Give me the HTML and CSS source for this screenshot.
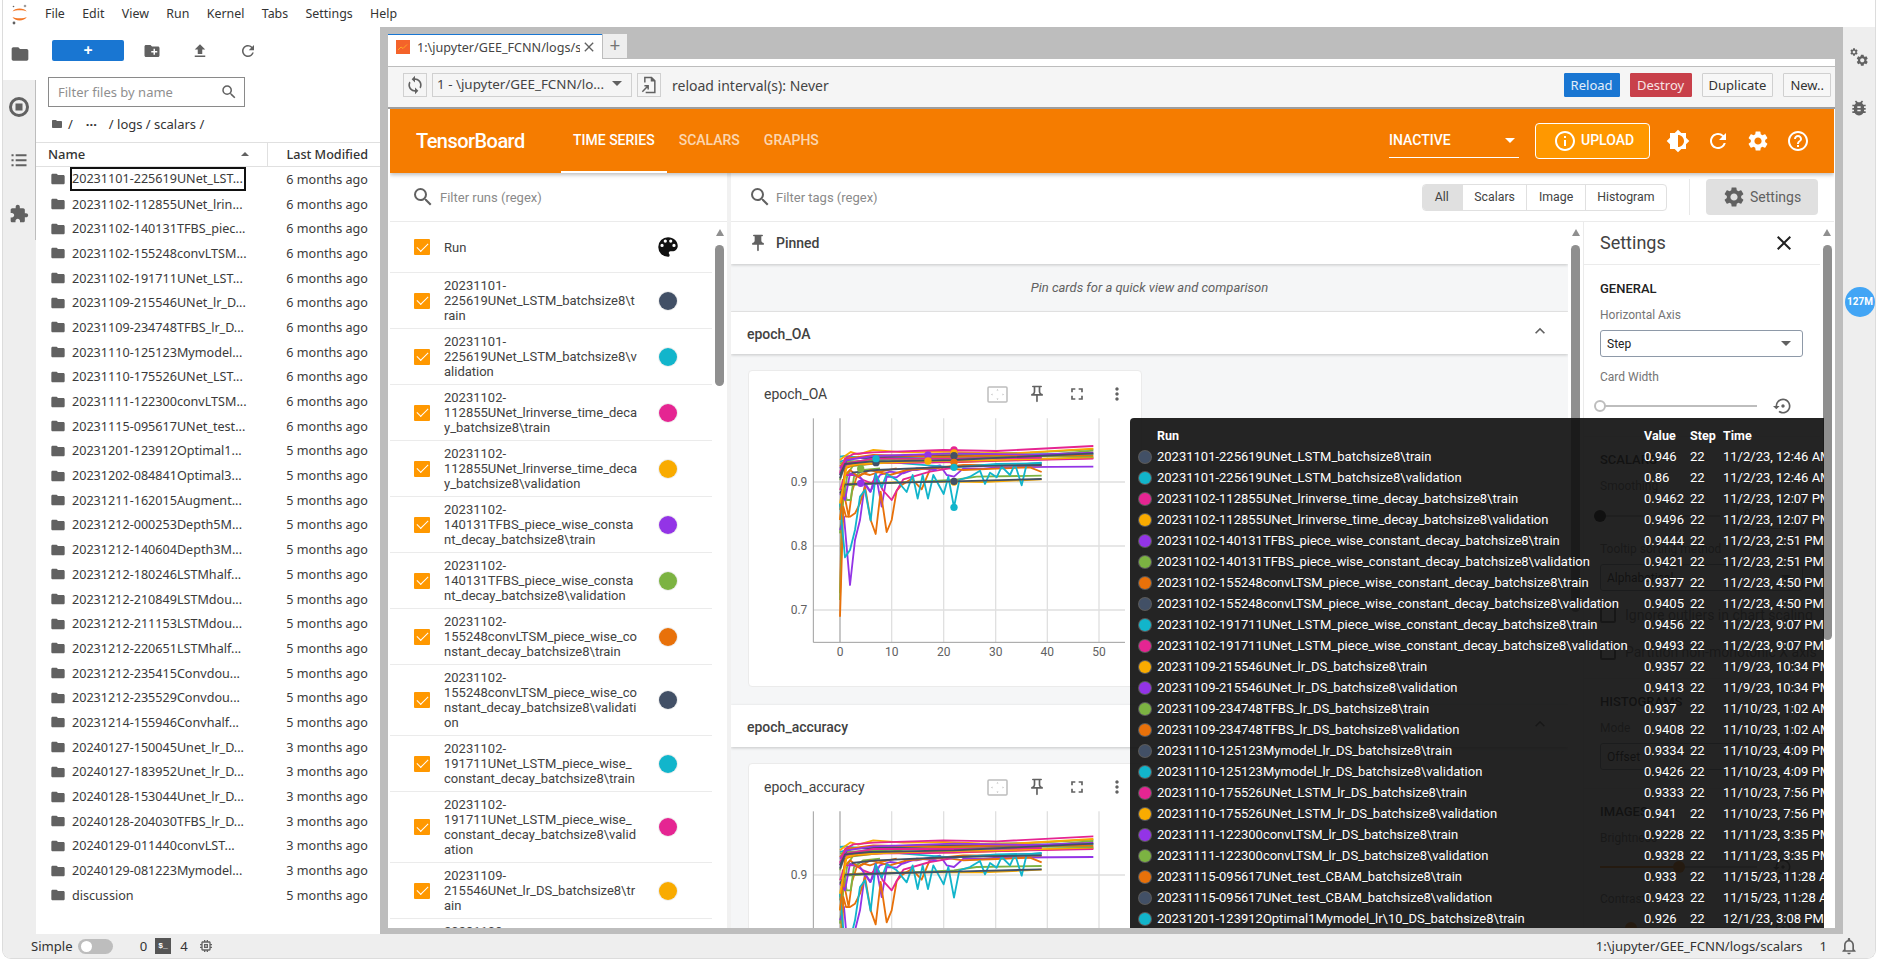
FILE: index.html
```html
<!DOCTYPE html>
<html lang="en">
<head>
<meta charset="utf-8">
<title>JupyterLab - TensorBoard</title>
<link rel="stylesheet" href="styles.css">
</head>
<body>
<svg class="defs" aria-hidden="true">
  <symbol id="i-folder" viewBox="0 0 24 24"><path d="M10 4H4c-1.1 0-2 .9-2 2v12c0 1.1.9 2 2 2h16c1.1 0 2-.9 2-2V8c0-1.1-.9-2-2-2h-8l-2-2z"/></symbol>
  <symbol id="i-stop" viewBox="0 0 24 24"><path fill-rule="evenodd" d="M12 2a10 10 0 1 0 0 20 10 10 0 0 0 0-20zm0 3a7 7 0 1 1 0 14 7 7 0 0 1 0-14zM8.500 8.500h7v7h-7z"/></symbol>
  <symbol id="i-list" viewBox="0 0 24 24"><path d="M3 5h2.500v2.500H3zM8 5h13v2.500H8zM3 11h2.500v2.500H3zM8 11h13v2.500H8zM3 17h2.500v2.500H3zM8 17h13v2.500H8z"/></symbol>
  <symbol id="i-ext" viewBox="0 0 24 24"><path d="M20.500 11H19V7c0-1.100-.9-2-2-2h-4V3.500C13 2.120 11.880 1 10.500 1S8 2.120 8 3.500V5H4c-1.100 0-1.990.9-1.990 2v3.800H3.500c1.490 0 2.700 1.210 2.700 2.700s-1.210 2.700-2.700 2.700H2V20c0 1.100.9 2 2 2h3.800v-1.500c0-1.490 1.210-2.700 2.700-2.700 1.490 0 2.700 1.210 2.700 2.700V22H17c1.100 0 2-.9 2-2v-4h1.500c1.380 0 2.500-1.120 2.500-2.500S21.880 11 20.500 11z"/></symbol>
  <symbol id="i-newfolder" viewBox="0 0 24 24"><path d="M20 6h-8l-2-2H4c-1.110 0-1.990.89-1.990 2L2 18c0 1.110.89 2 2 2h16c1.110 0 2-.89 2-2V8c0-1.110-.89-2-2-2zm-1 8h-3v3h-2v-3h-3v-2h3V9h2v3h3v2z"/></symbol>
  <symbol id="i-upload" viewBox="0 0 24 24"><path d="M9 16h6v-6h4l-7-7-7 7h4zm-4 2h14v2H5z"/></symbol>
  <symbol id="i-refresh" viewBox="0 0 24 24"><path d="M17.650 6.350A7.958 7.958 0 0 0 12 4c-4.420 0-7.990 3.580-7.990 8s3.570 8 7.990 8c3.730 0 6.840-2.550 7.730-6h-2.080A5.990 5.990 0 0 1 12 18c-3.310 0-6-2.690-6-6s2.690-6 6-6c1.660 0 3.140.69 4.220 1.780L13 11h7V4l-2.350 2.350z"/></symbol>
  <symbol id="i-search" viewBox="0 0 24 24"><path d="M15.500 14h-.79l-.28-.27A6.471 6.471 0 0 0 16 9.500 6.500 6.500 0 1 0 9.500 16c1.610 0 3.090-.59 4.230-1.570l.27.28v.79l5 4.990L20.490 19l-4.990-5zm-6 0C7.010 14 5 11.990 5 9.500S7.010 5 9.500 5 14 7.010 14 9.500 11.990 14 9.500 14z"/></symbol>
  <symbol id="i-gear" viewBox="0 0 24 24"><path id="gear-shape" d="M19.140 12.940c.04-.3.06-.61.06-.94 0-.32-.02-.64-.07-.94l2.030-1.580a.49.49 0 0 0 .12-.61l-1.920-3.320a.488.488 0 0 0-.59-.22l-2.390.96c-.5-.38-1.030-.7-1.620-.94l-.36-2.540a.484.484 0 0 0-.48-.41h-3.840c-.24 0-.43.17-.47.41l-.36 2.540c-.59.24-1.130.57-1.620.94l-2.390-.96c-.22-.08-.47 0-.59.22L2.740 8.870c-.12.21-.08.47.12.61l2.030 1.580c-.05.3-.09.63-.09.94s.02.64.07.94l-2.030 1.580a.49.49 0 0 0-.12.61l1.920 3.320c.12.22.37.29.59.22l2.390-.96c.5.38 1.030.7 1.620.94l.36 2.540c.05.24.24.41.48.41h3.840c.24 0 .44-.17.47-.41l.36-2.540c.59-.24 1.130-.56 1.620-.94l2.390.96c.22.08.47 0 .59-.22l1.920-3.320c.12-.22.07-.47-.12-.61l-2.010-1.580zM12 15.600c-1.980 0-3.600-1.620-3.600-3.600s1.620-3.600 3.600-3.600 3.600 1.620 3.600 3.600-1.620 3.600-3.600 3.600z"/></symbol>
  <symbol id="i-gears" viewBox="0 0 24 24"><g transform="translate(7.500 7.500) scale(.7)"><use href="#gear-shape"/></g><g transform="translate(.5 .5) scale(.46)"><use href="#gear-shape"/></g></symbol>
  <symbol id="i-help" viewBox="0 0 24 24"><path d="M11 18h2v-2h-2v2zm1-16C6.480 2 2 6.480 2 12s4.480 10 10 10 10-4.480 10-10S17.520 2 12 2zm0 18c-4.410 0-8-3.590-8-8s3.590-8 8-8 8 3.590 8 8-3.590 8-8 8zm0-14c-2.210 0-4 1.790-4 4h2c0-1.100.9-2 2-2s2 .9 2 2c0 2-3 1.750-3 5h2c0-2.250 3-2.500 3-5 0-2.210-1.790-4-4-4z"/></symbol>
  <symbol id="i-info" viewBox="0 0 24 24"><path d="M11 7h2v2h-2zm0 4h2v6h-2zm1-9C6.480 2 2 6.480 2 12s4.480 10 10 10 10-4.480 10-10S17.520 2 12 2zm0 18c-4.410 0-8-3.590-8-8s3.590-8 8-8 8 3.590 8 8-3.590 8-8 8z"/></symbol>
  <symbol id="i-bright" viewBox="0 0 24 24"><path d="M20 15.310L23.310 12 20 8.690V4h-4.690L12 .69 8.690 4H4v4.690L.69 12 4 15.310V20h4.690L12 23.310 15.310 20H20v-4.690zM12 18V6c3.310 0 6 2.690 6 6s-2.690 6-6 6z"/></symbol>
  <symbol id="i-palette" viewBox="0 0 24 24"><path d="M12 3a9 9 0 0 0 0 18c.83 0 1.500-.67 1.500-1.500 0-.39-.15-.74-.39-1.010-.23-.26-.38-.61-.38-.99 0-.83.67-1.500 1.500-1.500H16c2.760 0 5-2.240 5-5 0-4.420-4.030-8-9-8zm-5.500 9a1.500 1.500 0 1 1 0-3 1.500 1.500 0 0 1 0 3zm3-4a1.500 1.500 0 1 1 0-3 1.500 1.500 0 0 1 0 3zm5 0a1.500 1.500 0 1 1 0-3 1.500 1.500 0 0 1 0 3zm3 4a1.500 1.500 0 1 1 0-3 1.500 1.500 0 0 1 0 3z"/></symbol>
  <symbol id="i-pin" viewBox="0 0 24 24"><path d="M16 9V4h1c.55 0 1-.45 1-1s-.45-1-1-1H7c-.55 0-1 .45-1 1s.45 1 1 1h1v5c0 1.660-1.340 3-3 3v2h5.970v7l1 1 1-1v-7H19v-2c-1.660 0-3-1.340-3-3z"/></symbol>
  <symbol id="i-pinline" viewBox="0 0 24 24"><path d="M14 4v5c0 1.120.37 2.160 1 3H9c.65-.86 1-1.900 1-3V4h4m3-2H7c-.55 0-1 .45-1 1s.45 1 1 1h1v5c0 1.660-1.340 3-3 3v2h5.970v7l1 1 1-1v-7H19v-2c-1.660 0-3-1.340-3-3V4h1c.55 0 1-.45 1-1s-.45-1-1-1z"/></symbol>
  <symbol id="i-full" viewBox="0 0 24 24"><path d="M7 14H5v5h5v-2H7v-3zm-2-4h2V7h3V5H5v5zm12 7h-3v2h5v-5h-2v3zM14 5v2h3v3h2V5h-5z"/></symbol>
  <symbol id="i-more" viewBox="0 0 24 24"><path d="M12 8c1.100 0 2-.9 2-2s-.9-2-2-2-2 .9-2 2 .9 2 2 2zm0 2c-1.100 0-2 .9-2 2s.9 2 2 2 2-.9 2-2-.9-2-2-2zm0 6c-1.100 0-2 .9-2 2s.9 2 2 2 2-.9 2-2-.9-2-2-2z"/></symbol>
  <symbol id="i-close" viewBox="0 0 24 24"><path d="M19 6.410L17.590 5 12 10.590 6.410 5 5 6.410 10.590 12 5 17.590 6.410 19 12 13.410 17.590 19 19 17.590 13.410 12 19 6.410z"/></symbol>
  <symbol id="i-up" viewBox="0 0 24 24"><path d="M12 8l-6 6 1.410 1.410L12 10.830l4.590 4.580L18 14z"/></symbol>
  <symbol id="i-restore" viewBox="0 0 24 24"><path d="M14 12c0-1.100-.9-2-2-2s-2 .9-2 2 .9 2 2 2 2-.9 2-2zm-2-9a9 9 0 0 0-9 9H0l4 4 4-4H5c0-3.870 3.130-7 7-7s7 3.130 7 7a6.995 6.995 0 0 1-11.060 5.700l-1.420 1.440A9 9 0 1 0 12 3z"/></symbol>
  <symbol id="i-bug" viewBox="0 0 24 24"><path d="M20 8h-2.810a5.985 5.985 0 0 0-1.820-1.960L17 4.410 15.590 3l-2.170 2.170C12.960 5.060 12.490 5 12 5s-.96.06-1.410.17L8.410 3 7 4.410l1.620 1.630C7.880 6.550 7.260 7.220 6.810 8H4v2h2.090c-.05.33-.09.66-.09 1v1H4v2h2v1c0 .34.04.67.09 1H4v2h2.810c1.040 1.790 2.970 3 5.190 3s4.150-1.210 5.190-3H20v-2h-2.090c.05-.33.09-.66.09-1v-1h2v-2h-2v-1c0-.34-.04-.67-.09-1H20V8zm-6 8h-4v-2h4v2zm0-4h-4v-2h4v2z"/></symbol>
  <symbol id="i-bell" viewBox="0 0 24 24"><path d="M12 22c1.100 0 2-.9 2-2h-4c0 1.100.89 2 2 2zm6-6v-5c0-3.070-1.640-5.640-4.500-6.320V4c0-.83-.67-1.500-1.500-1.500s-1.500.67-1.500 1.500v.68C7.630 5.360 6 7.920 6 11v5l-2 2v1h16v-1l-2-2zm-2 1H8v-6c0-2.480 1.510-4.500 4-4.500s4 2.020 4 4.500v6z"/></symbol>
  <symbol id="i-chip" viewBox="0 0 24 24"><path d="M15 9H9v6h6V9zm-2 4h-2v-2h2v2zm8-2V9h-2V7c0-1.100-.9-2-2-2h-2V3h-2v2h-2V3H9v2H7c-1.100 0-2 .9-2 2v2H3v2h2v2H3v2h2v2c0 1.100.9 2 2 2h2v2h2v-2h2v2h2v-2h2c1.100 0 2-.9 2-2v-2h2v-2h-2v-2h2zm-4 6H7V7h10v10z"/></symbol>
  <symbol id="i-sync" viewBox="0 0 24 24"><path d="M12 4V1L8 5l4 4V6c3.310 0 6 2.690 6 6 0 1.010-.25 1.970-.7 2.800l1.460 1.460A7.930 7.930 0 0 0 20 12c0-4.420-3.580-8-8-8zm0 14c-3.310 0-6-2.690-6-6 0-1.010.25-1.970.7-2.800L5.240 7.740A7.930 7.930 0 0 0 4 12c0 4.420 3.580 8 8 8v3l4-4-4-4v3z"/></symbol>
  <symbol id="i-openfile" viewBox="0 0 24 24"><path fill="none" stroke="#616161" stroke-width="1.800" d="M7 9V3h8l4 4v14H8M15 3v4h4M4 20l7-7M6.500 13H11v4.500"/></symbol>
  <symbol id="series" viewBox="54 174 1182 762">
    <g class="ln">
      <polyline class="s-green" points="330,520 340,420 352,345 368,318 420,312 520,298 720,292 935,286 1090,272"/>
      <polyline class="s-amber" points="330,480 345,372 420,368 672,365 760,366 935,358"/>
      <polyline class="s-green" points="330,440 345,376 500,368 672,360 740,350 935,347"/>
      <polyline class="s-orange" points="330,700 338,360 346,420 356,470 366,395 380,350 400,340 420,345 450,335 500,325"/>
      <polyline class="s-green" points="330,720 340,360 350,420 362,420 372,350 400,330 450,325"/>
      <polyline class="s-purple" points="330,510 342,470 360,675 375,540 390,480 405,370 422,395 437,340 455,440 470,350 500,352 530,330 560,330 600,322 630,316 650,345 672,350 700,325 760,326 800,322 1090,320"/>
      <polyline class="s-orange" points="330,770 340,440 348,470 360,470 375,460 390,430 405,380 422,480 437,522 452,395 470,516 485,480 500,392 515,375 545,356 575,388 600,328 640,322 700,330 800,326 900,322 935,336"/>
      <polyline class="s-pink" points="330,390 345,345 375,345 400,360 425,370 440,350 458,390 485,420 500,392 520,358 600,335 700,318 935,310"/>
      <polyline class="s-purple" points="330,400 345,420 360,340 390,350 420,395 450,345 480,335 520,340 560,325 620,330"/>
      <polyline class="s-orange" points="330,450 345,345 360,330 385,350 420,330 480,345 530,330 600,325 700,315 935,316"/>
      <polyline class="s-cyan" points="330,430 345,592 360,570 375,510 390,410 405,390 422,482 437,342 455,382 470,342 500,360 530,396 548,345 563,416 578,345 594,416 610,345 641,402 655,350 672,442 688,360 720,350 750,332 765,372 780,338 800,352 815,320 840,345 855,312 875,376 890,312 935,308"/>
      <polyline class="s-cyan" points="330,305 345,300 375,306 420,298 520,310 672,322 800,312 935,310"/>
      <polyline class="s-slate" points="365,338 440,330 672,320 935,315"/>
      <polyline class="s-slate" points="330,400 345,373 500,368 672,364 935,357"/>
      <polyline class="s-orange" points="330,480 345,325 375,315 500,305 672,307 935,298 1090,294"/>
      <polyline class="s-pink" points="330,320 345,315 400,310 600,308 800,302 1090,296"/>
      <polyline class="s-amber" points="330,430 350,320 380,312 594,303 800,300 1090,292"/>
      <polyline class="s-purple" points="330,345 350,310 400,305 594,285 800,295 935,292"/>
      <polyline class="s-green" points="330,310 350,305 520,296 800,288 1090,290"/>
      <polyline class="s-cyan" points="330,290 345,288 400,294 438,296 600,288 800,284 1090,282"/>
      <polyline class="s-green" points="330,360 350,296 420,290 672,282 900,278 1090,268"/>
      <polyline class="s-slate" points="330,355 350,300 370,295 500,290 672,287 935,285"/>
      <polyline class="s-amber" points="330,300 345,288 362,276 385,283 430,270 520,277 640,275 750,279 850,280 1090,266"/>
      <polyline class="s-orange" points="330,320 350,296 430,285 640,290 800,286 1090,286"/>
      <polyline class="s-purple" points="330,325 350,300 430,288 672,280 900,284 1090,278"/>
      <polyline class="s-pink" points="330,340 345,296 370,282 430,277 640,270 800,273 1090,258"/>
      <polyline class="s-pink" points="330,335 350,310 430,296 672,296 935,293"/>
      <polyline class="s-slate" points="330,345 345,312 420,305 672,300 1090,280"/>
    </g>
  </symbol>
  <symbol id="markers" viewBox="54 174 1182 762">
    <circle class="f-pink" cx="672" cy="270" r="11"/>
    <circle class="f-amber" cx="672" cy="279" r="11"/>
    <circle class="f-slate" cx="672" cy="287" r="11"/>
    <circle class="f-purple" cx="594" cy="285" r="11"/>
    <circle class="f-amber" cx="594" cy="303" r="11"/>
    <circle class="f-orange" cx="672" cy="307" r="11"/>
    <circle class="f-cyan" cx="672" cy="322" r="11"/>
    <circle class="f-slate" cx="438" cy="308" r="11"/>
    <circle class="f-cyan" cx="438" cy="296" r="11"/>
    <circle class="f-green" cx="392" cy="326" r="11"/>
    <circle class="f-purple" cx="392" cy="370" r="11"/>
    <circle class="f-amber" cx="672" cy="366" r="11"/>
    <circle class="f-slate" cx="672" cy="364" r="11"/>
    <circle class="f-cyan" cx="672" cy="442" r="11"/>
  </symbol>
</svg>

<div class="app">
  <header class="menubar">
    <svg class="jp-logo" viewBox="0 0 18 22"><path class="arc" d="M1.500 8.500C3.500 4.500 13.500 4.500 15.800 8.500C13 6.800 4.500 6.800 1.500 8.500z"/><path class="arc" d="M1.500 14C3.500 18.500 13.500 18.500 15.800 14C13 15.800 4.500 15.800 1.500 14z"/><circle class="dot1" cx="14" cy="3" r="1.300"/><circle class="dot2" cx="3" cy="20" r="1.400"/><circle class="dot2" cx="2.500" cy="3.500" r=".8"/></svg>
    <nav class="menus"><span>File</span><span>Edit</span><span>View</span><span>Run</span><span>Kernel</span><span>Tabs</span><span>Settings</span><span>Help</span></nav>
  </header>

  <div class="workspace">
    <aside class="leftbar">
      <div class="sidetab active"><svg class="ic20"><use href="#i-folder"/></svg></div>
      <div class="sidetab"><svg class="ic24"><use href="#i-stop"/></svg></div>
      <div class="sidetab"><svg class="ic20"><use href="#i-list"/></svg></div>
      <div class="sidetab"><svg class="ic20"><use href="#i-ext"/></svg></div>
    </aside>

    <section class="files">
      <div class="fb-tools">
        <button class="newbtn">+</button>
        <span class="fb-tool"><svg class="ic18"><use href="#i-newfolder"/></svg></span>
        <span class="fb-tool"><svg class="ic18"><use href="#i-upload"/></svg></span>
        <span class="fb-tool"><svg class="ic18"><use href="#i-refresh"/></svg></span>
      </div>
      <div class="fb-filter"><span>Filter files by name</span><svg class="ic18"><use href="#i-search"/></svg></div>
      <div class="crumbs"><svg class="ic12"><use href="#i-folder"/></svg><span>/</span><span class="dots">···</span><span>/ logs / scalars /</span></div>
      <div class="fb-head"><div class="col-name">Name<i class="sort"></i></div><div class="col-date">Last Modified</div></div>
      <ul class="fb-list">
        <li class="sel"><svg class="ic15"><use href="#i-folder"/></svg><span class="fname">20231101-225619UNet_LST...</span><span class="fdate">6 months ago</span></li>
        <li><svg class="ic15"><use href="#i-folder"/></svg><span class="fname">20231102-112855UNet_lrin...</span><span class="fdate">6 months ago</span></li>
        <li><svg class="ic15"><use href="#i-folder"/></svg><span class="fname">20231102-140131TFBS_piec...</span><span class="fdate">6 months ago</span></li>
        <li><svg class="ic15"><use href="#i-folder"/></svg><span class="fname">20231102-155248convLTSM...</span><span class="fdate">6 months ago</span></li>
        <li><svg class="ic15"><use href="#i-folder"/></svg><span class="fname">20231102-191711UNet_LST...</span><span class="fdate">6 months ago</span></li>
        <li><svg class="ic15"><use href="#i-folder"/></svg><span class="fname">20231109-215546UNet_lr_D...</span><span class="fdate">6 months ago</span></li>
        <li><svg class="ic15"><use href="#i-folder"/></svg><span class="fname">20231109-234748TFBS_lr_D...</span><span class="fdate">6 months ago</span></li>
        <li><svg class="ic15"><use href="#i-folder"/></svg><span class="fname">20231110-125123Mymodel...</span><span class="fdate">6 months ago</span></li>
        <li><svg class="ic15"><use href="#i-folder"/></svg><span class="fname">20231110-175526UNet_LST...</span><span class="fdate">6 months ago</span></li>
        <li><svg class="ic15"><use href="#i-folder"/></svg><span class="fname">20231111-122300convLTSM...</span><span class="fdate">6 months ago</span></li>
        <li><svg class="ic15"><use href="#i-folder"/></svg><span class="fname">20231115-095617UNet_test...</span><span class="fdate">6 months ago</span></li>
        <li><svg class="ic15"><use href="#i-folder"/></svg><span class="fname">20231201-123912Optimal1...</span><span class="fdate">5 months ago</span></li>
        <li><svg class="ic15"><use href="#i-folder"/></svg><span class="fname">20231202-084841Optimal3...</span><span class="fdate">5 months ago</span></li>
        <li><svg class="ic15"><use href="#i-folder"/></svg><span class="fname">20231211-162015Augment...</span><span class="fdate">5 months ago</span></li>
        <li><svg class="ic15"><use href="#i-folder"/></svg><span class="fname">20231212-000253Depth5M...</span><span class="fdate">5 months ago</span></li>
        <li><svg class="ic15"><use href="#i-folder"/></svg><span class="fname">20231212-140604Depth3M...</span><span class="fdate">5 months ago</span></li>
        <li><svg class="ic15"><use href="#i-folder"/></svg><span class="fname">20231212-180246LSTMhalf...</span><span class="fdate">5 months ago</span></li>
        <li><svg class="ic15"><use href="#i-folder"/></svg><span class="fname">20231212-210849LSTMdou...</span><span class="fdate">5 months ago</span></li>
        <li><svg class="ic15"><use href="#i-folder"/></svg><span class="fname">20231212-211153LSTMdou...</span><span class="fdate">5 months ago</span></li>
        <li><svg class="ic15"><use href="#i-folder"/></svg><span class="fname">20231212-220651LSTMhalf...</span><span class="fdate">5 months ago</span></li>
        <li><svg class="ic15"><use href="#i-folder"/></svg><span class="fname">20231212-235415Convdou...</span><span class="fdate">5 months ago</span></li>
        <li><svg class="ic15"><use href="#i-folder"/></svg><span class="fname">20231212-235529Convdou...</span><span class="fdate">5 months ago</span></li>
        <li><svg class="ic15"><use href="#i-folder"/></svg><span class="fname">20231214-155946Convhalf...</span><span class="fdate">5 months ago</span></li>
        <li><svg class="ic15"><use href="#i-folder"/></svg><span class="fname">20240127-150045Unet_lr_D...</span><span class="fdate">3 months ago</span></li>
        <li><svg class="ic15"><use href="#i-folder"/></svg><span class="fname">20240127-183952Unet_lr_D...</span><span class="fdate">3 months ago</span></li>
        <li><svg class="ic15"><use href="#i-folder"/></svg><span class="fname">20240128-153044Unet_lr_D...</span><span class="fdate">3 months ago</span></li>
        <li><svg class="ic15"><use href="#i-folder"/></svg><span class="fname">20240128-204030TFBS_lr_D...</span><span class="fdate">3 months ago</span></li>
        <li><svg class="ic15"><use href="#i-folder"/></svg><span class="fname">20240129-011440convLST...</span><span class="fdate">3 months ago</span></li>
        <li><svg class="ic15"><use href="#i-folder"/></svg><span class="fname">20240129-081223Mymodel...</span><span class="fdate">3 months ago</span></li>
        <li><svg class="ic15"><use href="#i-folder"/></svg><span class="fname">discussion</span><span class="fdate">5 months ago</span></li>
      </ul>
    </section>

    <main class="dock">
      <div class="tabbar">
        <div class="tab"><span class="tab-ico"><svg viewBox="0 0 14 14"><polyline points="2,10 5,7 7,8.500 11,4.500"/></svg></span><span class="tab-label">1:\jupyter/GEE_FCNN/logs/scalars</span><svg class="ic16 tab-x"><use href="#i-close"/></svg></div>
        <div class="tab-add">+</div>
      </div>
      <div class="panel">
        <div class="strip"></div>
        <div class="tools">
          <span class="tbtn"><svg class="ic20"><use href="#i-sync"/></svg></span>
          <span class="sel-box"><span>1 - \jupyter/GEE_FCNN/lo...</span><i class="caret"></i></span>
          <span class="tbtn"><svg class="ic20"><use href="#i-openfile"/></svg></span>
          <span class="reload-label">reload interval(s): Never</span>
          <span class="spacer"></span>
          <button class="btn btn-blue">Reload</button>
          <button class="btn btn-red">Destroy</button>
          <button class="btn">Duplicate</button>
          <button class="btn">New..</button>
        </div>

        <div class="tb">
          <header class="tb-head">
            <div class="tb-logo">TensorBoard</div>
            <nav class="tb-tabs"><span class="on">TIME SERIES</span><span>SCALARS</span><span>GRAPHS</span></nav>
            <span class="spacer"></span>
            <div class="inactive"><span>INACTIVE</span><i class="caret white"></i></div>
            <button class="upload"><svg class="ic24"><use href="#i-info"/></svg><span>UPLOAD</span></button>
            <div class="tb-icons">
              <svg class="ic24"><use href="#i-bright"/></svg>
              <svg class="ic24"><use href="#i-refresh"/></svg>
              <svg class="ic24"><use href="#i-gear"/></svg>
              <svg class="ic24"><use href="#i-help"/></svg>
            </div>
          </header>

          <div class="tb-body">
            <section class="runs">
              <div class="filter"><svg class="ic24"><use href="#i-search"/></svg><span>Filter runs (regex)</span></div>
              <div class="runs-main">
                <div class="runs-table">
                  <div class="run run-head"><i class="check"></i><span class="run-name">Run</span><svg class="ic26"><use href="#i-palette"/></svg></div>
                  <div class="run"><i class="check"></i><span class="run-name">20231101-225619UNet_LSTM_batchsize8\train</span><i class="swatch f-slate"></i></div>
                  <div class="run"><i class="check"></i><span class="run-name">20231101-225619UNet_LSTM_batchsize8\validation</span><i class="swatch f-cyan"></i></div>
                  <div class="run"><i class="check"></i><span class="run-name">20231102-112855UNet_lrinverse_time_decay_batchsize8\train</span><i class="swatch f-pink"></i></div>
                  <div class="run"><i class="check"></i><span class="run-name">20231102-112855UNet_lrinverse_time_decay_batchsize8\validation</span><i class="swatch f-amber"></i></div>
                  <div class="run"><i class="check"></i><span class="run-name">20231102-140131TFBS_piece_wise_constant_decay_batchsize8\train</span><i class="swatch f-purple"></i></div>
                  <div class="run"><i class="check"></i><span class="run-name">20231102-140131TFBS_piece_wise_constant_decay_batchsize8\validation</span><i class="swatch f-green"></i></div>
                  <div class="run"><i class="check"></i><span class="run-name">20231102-155248convLTSM_piece_wise_constant_decay_batchsize8\train</span><i class="swatch f-orange"></i></div>
                  <div class="run"><i class="check"></i><span class="run-name">20231102-155248convLTSM_piece_wise_constant_decay_batchsize8\validation</span><i class="swatch f-slate"></i></div>
                  <div class="run"><i class="check"></i><span class="run-name">20231102-191711UNet_LSTM_piece_wise_constant_decay_batchsize8\train</span><i class="swatch f-cyan"></i></div>
                  <div class="run"><i class="check"></i><span class="run-name">20231102-191711UNet_LSTM_piece_wise_constant_decay_batchsize8\validation</span><i class="swatch f-pink"></i></div>
                  <div class="run"><i class="check"></i><span class="run-name">20231109-215546UNet_lr_DS_batchsize8\train</span><i class="swatch f-amber"></i></div>
                  <div class="run"><i class="check"></i><span class="run-name">20231109-215546UNet_lr_DS_batchsize8\validation</span><i class="swatch f-purple"></i></div>
                </div>
                <div class="vbar"><i class="vbar-up"></i><i class="vbar-thumb th-runs"></i></div>
              </div>
            </section>

            <section class="metrics">
              <div class="m-tools">
                <div class="filter flat"><svg class="ic24"><use href="#i-search"/></svg><span>Filter tags (regex)</span></div>
                <span class="spacer"></span>
                <div class="seg"><span class="on">All</span><span>Scalars</span><span>Image</span><span>Histogram</span></div>
                <i class="m-div"></i>
                <button class="settings-btn"><svg class="ic24"><use href="#i-gear"/></svg>Settings</button>
              </div>
              <div class="m-body">
                <div class="cards">
                  <div class="sec-head pinned"><svg class="ic20"><use href="#i-pin"/></svg><span>Pinned</span></div>
                  <div class="pin-msg">Pin cards for a quick view and comparison</div>
                  <div class="sec-head"><span>epoch_OA</span><svg class="ic20 chev"><use href="#i-up"/></svg></div>
                  <div class="sec-body">
                    <article class="card">
                      <div class="card-head"><span>epoch_OA</span>
                        <div class="card-tools"><svg class="fit" viewBox="0 0 21 17"><rect x="1" y="1" width="19" height="15" rx="1"/><path d="M10.500 3l-1 1.500h2zM10.500 14l-1-1.500h2zM4 8.500l1.500-1v2zM17 8.500l-1.500-1v2z"/></svg><svg class="ic20"><use href="#i-pinline"/></svg><svg class="ic20"><use href="#i-full"/></svg><svg class="ic20"><use href="#i-more"/></svg></div>
                      </div>
                      <svg class="chart" viewBox="54 174 1182 762">
                        <g class="grid"><path d="M485 175V847M641 175V847M797 175V847M952 175V847M1107 175V847M250 366H1185M250 558H1185M250 750H1185"/></g>
                        <path class="zero" d="M330 175V847"/>
                        <path class="axis" d="M250 175V847H1185"/>
                        <use href="#series" x="54" y="174" width="1182" height="762"/>
                        <use href="#markers" x="54" y="174" width="1182" height="762"/>
                        <g class="tick-y"><text x="232" y="378">0.9</text><text x="232" y="570">0.8</text><text x="232" y="762">0.7</text></g>
                        <g class="tick-x"><text x="330" y="889">0</text><text x="485" y="889">10</text><text x="641" y="889">20</text><text x="797" y="889">30</text><text x="952" y="889">40</text><text x="1107" y="889">50</text></g>
                      </svg>
                    </article>
                  </div>
                  <div class="sec-head"><span>epoch_accuracy</span><svg class="ic20 chev"><use href="#i-up"/></svg></div>
                  <div class="sec-body">
                    <article class="card">
                      <div class="card-head"><span>epoch_accuracy</span>
                        <div class="card-tools"><svg class="fit" viewBox="0 0 21 17"><rect x="1" y="1" width="19" height="15" rx="1"/><path d="M10.500 3l-1 1.500h2zM10.500 14l-1-1.500h2zM4 8.500l1.500-1v2zM17 8.500l-1.500-1v2z"/></svg><svg class="ic20"><use href="#i-pinline"/></svg><svg class="ic20"><use href="#i-full"/></svg><svg class="ic20"><use href="#i-more"/></svg></div>
                      </div>
                      <svg class="chart" viewBox="54 174 1182 762">
                        <g class="grid"><path d="M485 175V847M641 175V847M797 175V847M952 175V847M1107 175V847M250 366H1185M250 558H1185M250 750H1185"/></g>
                        <path class="zero" d="M330 175V847"/>
                        <path class="axis" d="M250 175V847H1185"/>
                        <use href="#series" x="54" y="166" width="1182" height="762"/>
                        <g class="tick-y"><text x="232" y="378">0.9</text></g>
                      </svg>
                    </article>
                  </div>
                </div>
                <div class="vbar"><i class="vbar-up"></i><i class="vbar-thumb th-cards"></i></div>
                <aside class="settings">
                  <div class="set-title"><span>Settings</span><svg class="ic24"><use href="#i-close"/></svg></div>
                  <div class="set-sec first">
                    <h3>GENERAL</h3>
                    <div class="lbl">Horizontal Axis</div>
                    <div class="pick"><span>Step</span><i class="caret"></i></div>
                    <div class="lbl lbl-gap">Card Width</div>
                    <div class="slide"><i class="track short"><b class="knob hollow"></b></i><svg class="ic20"><use href="#i-restore"/></svg></div>
                  </div>
                  <div class="set-sec">
                    <h3>SCALARS</h3>
                    <div class="lbl">Smoothing</div>
                    <div class="slide tall"><i class="track mid"><b class="knob dark"></b></i><span class="num">0</span></div>
                    <div class="lbl lbl-gap">Tooltip sorting method</div>
                    <div class="pick"><span>Alphabetical</span><i class="caret"></i></div>
                    <div class="chk-row"><i class="box"></i><span>Ignore outliers in chart scaling</span></div>
                    <div class="chk-row far"><i class="box"></i><span>Partition non-monotonic X axis</span></div>
                  </div>
                  <div class="set-sec">
                    <h3>HISTOGRAMS</h3>
                    <div class="lbl">Mode</div>
                    <div class="pick"><span>Offset</span><i class="caret"></i></div>
                  </div>
                  <div class="set-sec">
                    <h3>IMAGES</h3>
                    <div class="lbl">Brightness</div>
                    <div class="slide"><i class="track short lit"><b class="knob amber at-half"></b></i><svg class="ic20"><use href="#i-restore"/></svg></div>
                    <div class="lbl lbl-gap">Contrast</div>
                    <div class="slide"><i class="track short"><b class="knob amber at-fifth"></b></i><svg class="ic20"><use href="#i-restore"/></svg></div>
                  </div>
                </aside>
                <div class="vbar narrow"><i class="vbar-up"></i><i class="vbar-thumb th-set"></i></div>
              </div>
            </section>
          </div>

          <div class="tip">
            <table>
              <thead><tr><th></th><th>Run</th><th>Value</th><th>Step</th><th>Time</th></tr></thead>
              <tbody>
                <tr><td><i class="pt f-slate"></i></td><td>20231101-225619UNet_LSTM_batchsize8\train</td><td>0.946</td><td>22</td><td>11/2/23, 12:46 AM</td></tr>
                <tr><td><i class="pt f-cyan"></i></td><td>20231101-225619UNet_LSTM_batchsize8\validation</td><td>0.86</td><td>22</td><td>11/2/23, 12:46 AM</td></tr>
                <tr><td><i class="pt f-pink"></i></td><td>20231102-112855UNet_lrinverse_time_decay_batchsize8\train</td><td>0.9462</td><td>22</td><td>11/2/23, 12:07 PM</td></tr>
                <tr><td><i class="pt f-amber"></i></td><td>20231102-112855UNet_lrinverse_time_decay_batchsize8\validation</td><td>0.9496</td><td>22</td><td>11/2/23, 12:07 PM</td></tr>
                <tr><td><i class="pt f-purple"></i></td><td>20231102-140131TFBS_piece_wise_constant_decay_batchsize8\train</td><td>0.9444</td><td>22</td><td>11/2/23, 2:51 PM</td></tr>
                <tr><td><i class="pt f-green"></i></td><td>20231102-140131TFBS_piece_wise_constant_decay_batchsize8\validation</td><td>0.9421</td><td>22</td><td>11/2/23, 2:51 PM</td></tr>
                <tr><td><i class="pt f-orange"></i></td><td>20231102-155248convLTSM_piece_wise_constant_decay_batchsize8\train</td><td>0.9377</td><td>22</td><td>11/2/23, 4:50 PM</td></tr>
                <tr><td><i class="pt f-slate"></i></td><td>20231102-155248convLTSM_piece_wise_constant_decay_batchsize8\validation</td><td>0.9405</td><td>22</td><td>11/2/23, 4:50 PM</td></tr>
                <tr><td><i class="pt f-cyan"></i></td><td>20231102-191711UNet_LSTM_piece_wise_constant_decay_batchsize8\train</td><td>0.9456</td><td>22</td><td>11/2/23, 9:07 PM</td></tr>
                <tr><td><i class="pt f-pink"></i></td><td>20231102-191711UNet_LSTM_piece_wise_constant_decay_batchsize8\validation</td><td>0.9493</td><td>22</td><td>11/2/23, 9:07 PM</td></tr>
                <tr><td><i class="pt f-amber"></i></td><td>20231109-215546UNet_lr_DS_batchsize8\train</td><td>0.9357</td><td>22</td><td>11/9/23, 10:34 PM</td></tr>
                <tr><td><i class="pt f-purple"></i></td><td>20231109-215546UNet_lr_DS_batchsize8\validation</td><td>0.9413</td><td>22</td><td>11/9/23, 10:34 PM</td></tr>
                <tr><td><i class="pt f-green"></i></td><td>20231109-234748TFBS_lr_DS_batchsize8\train</td><td>0.937</td><td>22</td><td>11/10/23, 1:02 AM</td></tr>
                <tr><td><i class="pt f-orange"></i></td><td>20231109-234748TFBS_lr_DS_batchsize8\validation</td><td>0.9408</td><td>22</td><td>11/10/23, 1:02 AM</td></tr>
                <tr><td><i class="pt f-slate"></i></td><td>20231110-125123Mymodel_lr_DS_batchsize8\train</td><td>0.9334</td><td>22</td><td>11/10/23, 4:09 PM</td></tr>
                <tr><td><i class="pt f-cyan"></i></td><td>20231110-125123Mymodel_lr_DS_batchsize8\validation</td><td>0.9426</td><td>22</td><td>11/10/23, 4:09 PM</td></tr>
                <tr><td><i class="pt f-pink"></i></td><td>20231110-175526UNet_LSTM_lr_DS_batchsize8\train</td><td>0.9333</td><td>22</td><td>11/10/23, 7:56 PM</td></tr>
                <tr><td><i class="pt f-amber"></i></td><td>20231110-175526UNet_LSTM_lr_DS_batchsize8\validation</td><td>0.941</td><td>22</td><td>11/10/23, 7:56 PM</td></tr>
                <tr><td><i class="pt f-purple"></i></td><td>20231111-122300convLTSM_lr_DS_batchsize8\train</td><td>0.9228</td><td>22</td><td>11/11/23, 3:35 PM</td></tr>
                <tr><td><i class="pt f-green"></i></td><td>20231111-122300convLTSM_lr_DS_batchsize8\validation</td><td>0.9328</td><td>22</td><td>11/11/23, 3:35 PM</td></tr>
                <tr><td><i class="pt f-orange"></i></td><td>20231115-095617UNet_test_CBAM_batchsize8\train</td><td>0.933</td><td>22</td><td>11/15/23, 11:28 AM</td></tr>
                <tr><td><i class="pt f-slate"></i></td><td>20231115-095617UNet_test_CBAM_batchsize8\validation</td><td>0.9423</td><td>22</td><td>11/15/23, 11:28 AM</td></tr>
                <tr><td><i class="pt f-cyan"></i></td><td>20231201-123912Optimal1Mymodel_lr\10_DS_batchsize8\train</td><td>0.926</td><td>22</td><td>12/1/23, 3:08 PM</td></tr>
              </tbody>
            </table>
          </div>
        </div>
      </div>
    </main>

    <aside class="rightbar">
      <div class="rtab"><svg class="ic20"><use href="#i-gears"/></svg></div>
      <div class="rtab"><svg class="ic20"><use href="#i-bug"/></svg></div>
      <div class="mem-badge">127M</div>
    </aside>
  </div>

  <footer class="status">
    <span class="st-simple">Simple</span><i class="toggle"></i>
    <span class="st-zero">0</span><span class="term">$_</span><span class="st-four">4</span><svg class="ic16"><use href="#i-chip"/></svg>
    <span class="spacer"></span>
    <span>1:\jupyter/GEE_FCNN/logs/scalars</span><span class="st-one">1</span><svg class="ic20"><use href="#i-bell"/></svg>
  </footer>
</div>
</body>
</html>
```
FILE: styles.css
```css
* { box-sizing: border-box; }
html, body { margin: 0; width: 1879px; height: 962px; overflow: hidden; background: #fff; }
body { font-family: "Noto Sans", "Open Sans", sans-serif; font-size: 13px; color: #333; }
button { font: inherit; }
ul { list-style: none; margin: 0; padding: 0; }
i { display: block; font-style: normal; }
svg { fill: #616161; flex: none; }
.defs { position: absolute; width: 0; height: 0; }
.spacer { flex: 1; }
.ic12 { width: 12px; height: 12px; }
.ic14 { width: 14px; height: 14px; }
.ic15 { width: 16px; height: 16px; }
.ic16 { width: 16px; height: 16px; }
.ic18 { width: 18px; height: 18px; }
.ic20 { width: 20px; height: 20px; }
.ic24 { width: 24px; height: 24px; }
.ic26 { width: 26px; height: 26px; }

.app { height: 959px; margin: 0 3px 0 2px; display: flex; flex-direction: column; border: 1px solid #dcdcdc; border-top: 0; border-radius: 0 0 9px 9px; overflow: hidden; }

/* menu */
.menubar { height: 27px; flex: none; display: flex; align-items: center; background: #fff; }
.jp-logo { width: 18px; height: 22px; margin-left: 8px; }
.jp-logo .arc { fill: #f37726; }
.jp-logo .dot1 { fill: #9e9e9e; }
.jp-logo .dot2 { fill: #616161; }
.menus { display: flex; gap: 17.400px; margin-left: 16px; font-size: 12.400px; color: #333; }

.workspace { flex: 1; min-height: 0; display: flex; }

/* left */
.leftbar { width: 33px; flex: none; background: #eee; }
.sidetab { height: 53.300px; display: flex; align-items: center; justify-content: center; border-right: 1px solid #bdbdbd; }
.sidetab.active { background: #fff; border-right: 0; }

.files { width: 344px; flex: none; display: flex; flex-direction: column; background: #fff; font-size: 12.600px; }
.fb-tools { display: flex; align-items: center; padding: 13px 0 0 16px; height: 34px; }
.newbtn { width: 72px; height: 21px; margin-right: 4px; padding: 0 0 1px; border: 0; border-radius: 2px; background: #1976d2; color: #fff; font-size: 16px; font-weight: 700; line-height: 20px; }
.fb-tool { width: 48px; display: flex; justify-content: center; }
.fb-filter { margin: 16px 0 0 12px; width: 197px; height: 30px; flex: none; border: 1px solid #8a8a8a; display: flex; align-items: center; justify-content: space-between; padding: 0 6px 0 9px; color: #8f8f8f; font-size: 13px; }
.crumbs { height: 35px; flex: none; display: flex; align-items: center; gap: 5px; padding: 0 0 2px 15px; font-size: 13px; }
.crumbs .dots { margin: 0 7px 0 8px; font-weight: 700; color: #333; }
.fb-head { height: 25px; flex: none; display: flex; border-top: 1px solid #e0e0e0; border-bottom: 1px solid #e0e0e0; font-weight: 500; color: #333; line-height: 23px; font-size: 13px; }
.col-name { width: 232px; padding-left: 12px; position: relative; border-right: 1px solid #e0e0e0; display: flex; justify-content: space-between; }
.sort { margin: 9px 18px 0 0; border-left: 4px solid transparent; border-right: 4px solid transparent; border-bottom: 4px solid #616161; width: 0; height: 0; }
.col-date { flex: 1; padding-right: 12px; text-align: right; font-size: 12.600px; }
.fb-list li { height: 24.690px; display: flex; align-items: center; padding: 0 12px 0 14px; }
.fb-list li svg { margin-right: 6px; }
.fname { flex: 1; white-space: nowrap; padding-left: 0; color: #3a3a3a; }
.fb-list .sel .fname { outline: 2px solid #111; outline-offset: 0; flex: none; width: 172px; height: 20px; line-height: 20px; margin-right: auto; margin-left: 0; }
.fdate { color: #3a3a3a; }

/* dock */
.dock { flex: 1; min-width: 0; display: flex; flex-direction: column; background: #bdbdbd; padding: 0 8px 6px; }
.tabbar { height: 32px; flex: none; display: flex; align-items: flex-start; padding-top: 7px; gap: 1px; }
.tab { width: 214px; height: 25px; background: #fff; border-top: 1px solid #1976d2; display: flex; align-items: center; padding: 0 5px 0 8px; }
.tab-ico { width: 14px; height: 14px; background: #f4632a; flex: none; margin-right: 7px; display: block; }
.tab-ico svg { display: block; fill: none; stroke: #ffa726; stroke-width: 1; }
.tab-label { flex: 1; min-width: 0; overflow: hidden; white-space: nowrap; font-size: 12.600px; color: #444; }
.tab-x { margin-left: 1px; }
.tab-add { width: 24px; height: 24px; background: #eee; text-align: center; font-size: 19px; line-height: 22px; color: #757575; }

.panel { flex: 1; min-height: 0; display: flex; flex-direction: column; background: #fff; }
.strip { height: 8px; flex: none; background: #fff; border-bottom: 1px solid #bdbdbd; }
.tools { height: 42px; flex: none; display: flex; align-items: center; background: #f5f5f5; border-bottom: 2px solid #9e9e9e; padding: 0 4px 4px 15px; font-size: 13px; }
.tbtn { width: 24px; height: 24px; display: flex; align-items: center; justify-content: center; border: 1px solid #d0d0d0; }
.sel-box { width: 200px; height: 24px; margin: 0 5px; padding: 0 9px 3px 4px; display: flex; align-items: center; justify-content: space-between; border: 1px solid #d0d0d0; font-size: 13.400px; color: #444; }
.caret { width: 0; height: 0; border-left: 5px solid transparent; border-right: 5px solid transparent; border-top: 5px solid #616161; }
.caret.white { border-top-color: #fff; }
.reload-label { margin-left: 11px; color: #444; font-size: 14px; }
.btn { height: 24px; padding: 0 6px 1px; margin-left: 10px; border: 1px solid #d0d0d0; background: #f7f7f7; border-radius: 1px; font-size: 13px; color: #333; line-height: 20px; }
.btn-blue { background: #1976d2; border-color: #1976d2; color: #e3eefa; width: 56px; }
.btn-red { background: #c8404a; border-color: #c8404a; color: #f7e4e4; width: 62px; }

/* tensorboard */
.tb { flex: 1; min-height: 0; margin: 0 1px 0 2px; position: relative; overflow: hidden; display: flex; flex-direction: column; font-family: Roboto, sans-serif; font-size: 14px; color: #212121; }
.tb-head { height: 64px; flex: none; display: flex; align-items: center; background: #f57c00; color: #fff; position: relative; z-index: 2; box-shadow: 0 2px 4px rgba(0,0,0,.25); padding-left: 26px; }
.tb-logo { font-size: 20px; font-weight: 500; letter-spacing: -.55px; width: 145px; }
.tb-tabs { display: flex; height: 64px; }
.tb-tabs span { padding: 0 12px; line-height: 62px; font-weight: 500; color: rgba(255,255,255,.7); font-size: 14px; }
.tb-tabs .on { color: #fff; border-bottom: 2px solid #fff; height: 64px; }
.inactive { width: 130px; height: 33px; margin-top: 0; padding-bottom: 2px; display: flex; align-items: center; justify-content: space-between; padding-right: 4px; border-bottom: 1px solid #fff; font-weight: 500; }
.inactive .caret { margin-top: 2px; }
.upload { margin-left: 16px; width: 115px; height: 36px; display: flex; align-items: center; gap: 4px; padding: 0 0 0 17px; background: #ff9800; border: 1px solid #fff; border-radius: 4px; color: #fff; font-family: Roboto, sans-serif; font-weight: 500; font-size: 14px; }
.upload span { margin-top: -2px; }
.upload svg { fill: #fff; }
.tb-icons { display: flex; gap: 16px; margin: 0 24px 0 16px; }
.tb-icons svg { fill: #fff; }

.tb-body { flex: 1; min-height: 0; display: flex; }
.runs { width: 341px; flex: none; display: flex; flex-direction: column; border-right: 4px solid #f1f1f1; }
.filter { height: 49px; flex: none; display: flex; align-items: center; gap: 5px; padding-left: 21px; border-bottom: 1px solid #ebebeb; color: #8a8a8a; font-size: 13px; }
.filter svg { fill: #616161; }
.filter.flat { border: 0; height: auto; padding-left: 17px; gap: 4px; }
.runs-main { flex: 1; min-height: 0; display: flex; }
.runs-table { flex: 1; min-width: 0; overflow: hidden; }
.run { display: flex; align-items: center; padding: 5px 0 5px 24px; border-bottom: 1px solid #ebebeb; line-height: 15px; font-size: 13px; color: #424242; }
.run-head { height: 51px; }
.run-head svg { fill: #111; margin-left: 17px; }
.check { width: 16px; height: 16px; flex: none; background: #ff9800; border-radius: 1px; position: relative; margin-right: 14px; }
.check::after { content: ""; position: absolute; left: 3px; top: 3.500px; width: 10px; height: 5px; border-left: 1.500px solid #fff; border-bottom: 1.500px solid #fff; transform: rotate(-45deg); }
.run-name { width: 194px; flex: none; overflow-wrap: anywhere; }
.swatch { width: 18px; height: 18px; border-radius: 50%; margin-left: 21px; flex: none; box-shadow: 0 0 0 1px #eee; }

.vbar { width: 15px; flex: none; background: #fff; display: flex; flex-direction: column; align-items: center; padding-top: 7px; }
.vbar.narrow { width: 14px; }
.vbar-up { width: 0; height: 0; border-left: 4.500px solid transparent; border-right: 4.500px solid transparent; border-bottom: 7px solid #8f8f8f; }
.vbar-thumb { width: 9px; margin-top: 9px; background: #8f8f8f; border-radius: 5px; }
.th-runs { height: 141px; }
.th-cards { height: 367px; }
.th-set { height: 395px; }

.metrics { flex: 1; min-width: 0; display: flex; flex-direction: column; }
.m-tools { height: 49px; flex: none; display: flex; align-items: center; border-bottom: 1px solid #ebebeb; padding: 0 16px 0 0; }
.seg { display: flex; height: 27px; border: 1px solid #e0e0e0; border-radius: 4px; font-size: 12.300px; line-height: 25px; color: #424242; overflow: hidden; }
.seg span { padding: 0 11.500px; border-left: 1px solid #e0e0e0; }
.seg span:first-child { border: 0; }
.seg .on { background: #e0e0e0; width: 39px; padding: 0 12px; }
.m-div { width: 1px; height: 36px; background: #e8e8e8; margin: 0 16px 0 22px; }
.settings-btn { width: 112px; height: 36px; display: flex; align-items: center; gap: 4px; padding: 0 0 0 16px; border: 0; border-radius: 4px; background: #e0e0e0; color: #616161; font-family: Roboto, sans-serif; font-size: 14px; }
.settings-btn svg { fill: #616161; }

.m-body { flex: 1; min-height: 0; display: flex; }
.cards { width: 837px; flex: none; overflow: hidden; background: #f5f6f7; }
.sec-head { height: 42px; display: flex; align-items: center; justify-content: space-between; padding: 1px 17px 0 16px; background: #fff; box-shadow: 0 1px 3px rgba(0,0,0,.2); font-size: 14px; font-weight: 500; color: #424242; position: relative; }
.sec-head .chev { margin-right: 1px; margin-top: -5px; }
.sec-head.pinned { justify-content: flex-start; gap: 8px; padding: 0 0 0 17px; }
.pin-msg { height: 48px; display: flex; align-items: center; justify-content: center; border-bottom: 1px solid #e8e8e8; font-size: 13px; font-style: italic; color: #616161; padding-left: 0; }
.sec-body { padding: 16px 17px 18px; }
.card { width: 394px; height: 317px; background: #fff; border: 1px solid #ebebeb; border-radius: 4px; }
.cards > .sec-body:last-child .card { height: 400px; }
.card-head { height: 47px; display: flex; align-items: center; justify-content: space-between; padding: 0 14px 1px 15px; color: #424242; }
.card-tools { display: flex; align-items: center; gap: 20px; }
.fit { width: 21px; height: 17px; margin-right: -1px; fill: #bdbdbd; }
.fit rect { fill: none; stroke: #bdbdbd; stroke-width: 1.500; }
.chart { display: block; width: 394px; height: 254px; margin-left: -1px; }
.chart .grid path { stroke: #e0e0e0; stroke-width: 4; fill: none; }
.chart .zero { stroke: #bdbdbd; stroke-width: 5; fill: none; }
.chart .axis { stroke: #9e9e9e; stroke-width: 3; fill: none; }
.ln polyline { fill: none; stroke-width: 5.500; stroke-linejoin: round; }
.s-slate { stroke: #425066; }
.s-cyan { stroke: #12b5cb; }
.s-pink { stroke: #e52592; }
.s-amber { stroke: #f9ab00; }
.s-purple { stroke: #9334e6; }
.s-green { stroke: #7cb342; }
.s-orange { stroke: #e8710a; }
.f-slate { fill: #425066; background: #425066; }
.f-cyan { fill: #12b5cb; background: #12b5cb; }
.f-pink { fill: #e52592; background: #e52592; }
.f-amber { fill: #f9ab00; background: #f9ab00; }
.f-purple { fill: #9334e6; background: #9334e6; }
.f-green { fill: #7cb342; background: #7cb342; }
.f-orange { fill: #e8710a; background: #e8710a; }
.chart text { font-family: Roboto, sans-serif; font-size: 36px; fill: #616161; }
.tick-y text { text-anchor: end; }
.tick-x text { text-anchor: middle; }

/* settings */
.settings { width: 237px; flex: none; background: #fff; border-left: 1px solid #ebebeb; font-size: 12px; color: #212121; }
.set-title { height: 43px; display: flex; align-items: center; justify-content: space-between; padding: 0 24px 1px 16px; border-bottom: 1px solid #ebebeb; font-size: 18px; color: #424242; }
.set-title svg { fill: #212121; }
.set-sec { padding: 15px 16px 18px; border-bottom: 1px solid #ebebeb; }
.set-sec.first { padding: 16px 16px 18px; }
.set-sec h3 { margin: 0; font-size: 13px; font-weight: 500; line-height: 16px; color: #212121; }
.lbl { margin-top: 10px; line-height: 16px; color: #757575; }
.lbl-gap { margin-top: 12px; }
.pick { margin-top: 7px; height: 27px; width: 203px; border: 1px solid #8e99a8; border-radius: 3px; display: flex; align-items: center; justify-content: space-between; padding: 0 11px 0 6px; }
.slide { margin-top: 9px; height: 24px; display: flex; align-items: center; justify-content: space-between; }
.slide.tall { height: 27px; margin-top: 8px; }
.slide svg { margin-right: 11px; }
.track { position: relative; height: 2px; background: #bdbdbd; }
.track.short { width: 157px; }
.track.mid { width: 120px; }
.track.lit { background: linear-gradient(90deg, #f57c00 50%, #bdbdbd 50%); }
.knob { position: absolute; left: -6px; top: -5px; width: 12px; height: 12px; border-radius: 50%; background: #000; }
.knob.hollow { background: #fff; border: 2px solid #bdbdbd; }
.knob.amber { background: #f57c00; }
.knob.at-half { left: 73px; }
.knob.at-fifth { left: 25px; }
.num { width: 67px; height: 27px; border: 1px solid #8e99a8; border-radius: 2px; padding: 4px 6px; }
.chk-row { margin-top: 16px; height: 16px; display: flex; align-items: center; gap: 9px; color: #757575; font-size: 14px; white-space: nowrap; }
.chk-row.far { margin-top: 21px; }
.box { width: 16px; height: 16px; border: 2px solid #616161; border-radius: 2px; flex: none; }

/* hover tooltip */
.tip { position: absolute; left: 740px; top: 309px; width: 694px; height: 520px; z-index: 5; overflow: hidden; background: rgba(17,17,17,.92); border-radius: 4px 0 0 0; padding-top: 7px; font-size: 13px; color: #fff; }
.tip table { border-collapse: collapse; table-layout: fixed; width: 694px; }
.tip th:nth-child(1) { width: 27px; }
.tip th:nth-child(2) { width: 487px; }
.tip th:nth-child(3) { width: 46px; }
.tip th:nth-child(4) { width: 33px; }
.tip th, .tip td { padding: 0; height: 21px; line-height: 21px; text-align: left; white-space: nowrap; font-weight: 400; }
.tip th { font-weight: 700; font-size: 12.500px; }
.pt { width: 12px; height: 12px; border-radius: 50%; margin-left: 9px; box-shadow: 0 0 0 1px rgba(255,255,255,.25); }

/* right */
.rightbar { width: 32px; flex: none; background: #eee; position: relative; padding-top: 1px; }
.rtab { height: 51px; display: flex; align-items: center; justify-content: center; }
.rtab:first-child { margin-top: 3px; }
.mem-badge { position: absolute; left: 2px; top: 260px; width: 30px; height: 30px; border-radius: 50%; background: #42a5f5; color: #fff; font: 700 10px/30px Roboto, sans-serif; text-align: center; }

/* status */
.status { height: 24px; flex: none; display: flex; align-items: center; background: #eee; padding: 0 16px 0 28px; font-size: 13.100px; color: #333; }
.toggle { width: 35px; height: 15px; margin-left: 5px; border-radius: 8px; background: #bdbdbd; position: relative; }
.toggle::after { content: ""; position: absolute; left: 3px; top: 2px; width: 11px; height: 11px; border-radius: 50%; background: #fff; }
.st-zero { margin-left: 27px; }
.term { margin: 0 9px 0 8px; width: 16px; height: 16px; background: #555; color: #fff; font: 700 8px/16px "Liberation Mono", monospace; text-align: center; }
.st-four { margin-right: 10px; }
.st-one { margin: 0 12px 0 17px; }
```
